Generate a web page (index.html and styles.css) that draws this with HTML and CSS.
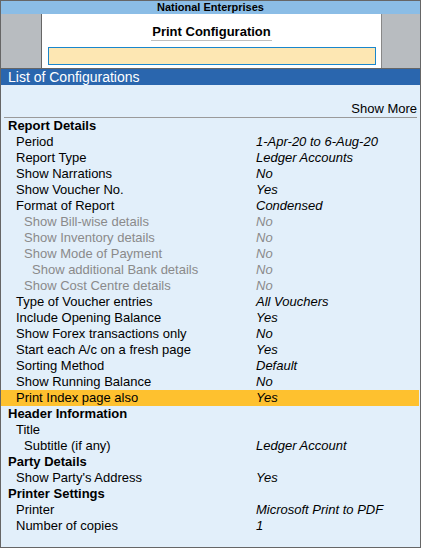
FILE: index.html
```html
<!DOCTYPE html>
<html>
<head>
<meta charset="utf-8">
<link rel="stylesheet" href="styles.css">
</head>
<body>
<div class="window">
  <div class="titlebar">National Enterprises</div>
  <div class="top">
    <div class="side side-left"></div>
    <div class="center">
      <div class="heading"><span class="heading-text">Print Configuration</span></div>
      <div class="search"></div>
    </div>
    <div class="side side-right"></div>
  </div>
  <div class="listhead">List of Configurations</div>
  <div class="body">
    <div class="showmore">Show More</div>
    <div class="rows">
      <div class="row group"><span class="l0">Report Details</span></div>
      <div class="row"><span class="l1">Period</span><span class="val">1-Apr-20 to 6-Aug-20</span></div>
      <div class="row"><span class="l1">Report Type</span><span class="val">Ledger Accounts</span></div>
      <div class="row"><span class="l1">Show Narrations</span><span class="val">No</span></div>
      <div class="row"><span class="l1">Show Voucher No.</span><span class="val">Yes</span></div>
      <div class="row"><span class="l1">Format of Report</span><span class="val">Condensed</span></div>
      <div class="row dim"><span class="l2">Show Bill-wise details</span><span class="val">No</span></div>
      <div class="row dim"><span class="l2">Show Inventory details</span><span class="val">No</span></div>
      <div class="row dim"><span class="l2">Show Mode of Payment</span><span class="val">No</span></div>
      <div class="row dim"><span class="l3">Show additional Bank details</span><span class="val">No</span></div>
      <div class="row dim"><span class="l2">Show Cost Centre details</span><span class="val">No</span></div>
      <div class="row"><span class="l1">Type of Voucher entries</span><span class="val">All Vouchers</span></div>
      <div class="row"><span class="l1">Include Opening Balance</span><span class="val">Yes</span></div>
      <div class="row"><span class="l1">Show Forex transactions only</span><span class="val">No</span></div>
      <div class="row"><span class="l1">Start each A/c on a fresh page</span><span class="val">Yes</span></div>
      <div class="row"><span class="l1">Sorting Method</span><span class="val">Default</span></div>
      <div class="row"><span class="l1">Show Running Balance</span><span class="val">No</span></div>
      <div class="row selected"><span class="l1">Print Index page also</span><span class="val">Yes</span></div>
      <div class="row group"><span class="l0">Header Information</span></div>
      <div class="row"><span class="l1">Title</span><span class="val"></span></div>
      <div class="row"><span class="l2">Subtitle (if any)</span><span class="val">Ledger Account</span></div>
      <div class="row group"><span class="l0">Party Details</span></div>
      <div class="row"><span class="l1">Show Party's Address</span><span class="val">Yes</span></div>
      <div class="row group"><span class="l0">Printer Settings</span></div>
      <div class="row"><span class="l1">Printer</span><span class="val">Microsoft Print to PDF</span></div>
      <div class="row"><span class="l1">Number of copies</span><span class="val">1</span></div>
    </div>
  </div>
</div>
</body>
</html>
```

FILE: styles.css
```css
* { box-sizing: border-box; }
html, body { margin: 0; padding: 0; }
body {
  font-family: "Liberation Sans", Arial, sans-serif;
  color: #000;
}
.window {
  width: 421px;
  height: 548px;
  border: 1px solid #666;
  display: flex;
  flex-direction: column;
  background: #e2effa;
}
.titlebar {
  height: 13px;
  background: #8bbde6;
  font-size: 11px;
  font-weight: bold;
  line-height: 13px;
  text-align: center;
  color: #000;
}
.top {
  display: flex;
  height: 55px;
  border-bottom: 1px solid #666;
}
.side {
  background: #b8bcc0;
  width: 41px;
}
.side-left { border-right: 1px solid #666; }
.side-right { border-left: 1px solid #888; width: 39px; }
.center {
  flex: 1;
  background: #fff;
  display: flex;
  flex-direction: column;
  align-items: center;
}
.heading {
  margin-top: 8px;
  height: 17px;
}
.heading-text {
  display: inline-block;
  font-size: 13px;
  font-weight: bold;
  line-height: 16px;
  border-bottom: 1px solid #bfbfbf;
  padding: 0 1px;
}
.search {
  margin-top: 8px;
  width: 328px;
  height: 18px;
  border: 1px solid #1a86cc;
  background: #fde7b3;
}
.listhead {
  height: 16px;
  background: #2a66ae;
  color: #fff;
  font-size: 14px;
  line-height: 16px;
  padding-left: 7px;
}
.body {
  flex: 1;
  font-size: 13px;
}
.showmore {
  margin: 16px 3px 0 3px;
  height: 17px;
  line-height: 16px;
  text-align: right;
  border-bottom: 1px solid #9a9a9a;
}
.rows {
  margin-right: 1px;
}
.row {
  display: grid;
  grid-template-columns: 255px 1fr;
  height: 16px;
  line-height: 16px;
}
.row.group { font-weight: bold; }
.l0 { padding-left: 7px; }
.l1 { padding-left: 15px; }
.l2 { padding-left: 23px; }
.l3 { padding-left: 31px; }
.val { font-style: italic; }
.dim { color: #8a8a8a; }
.selected { background: #fec12f; }
```
